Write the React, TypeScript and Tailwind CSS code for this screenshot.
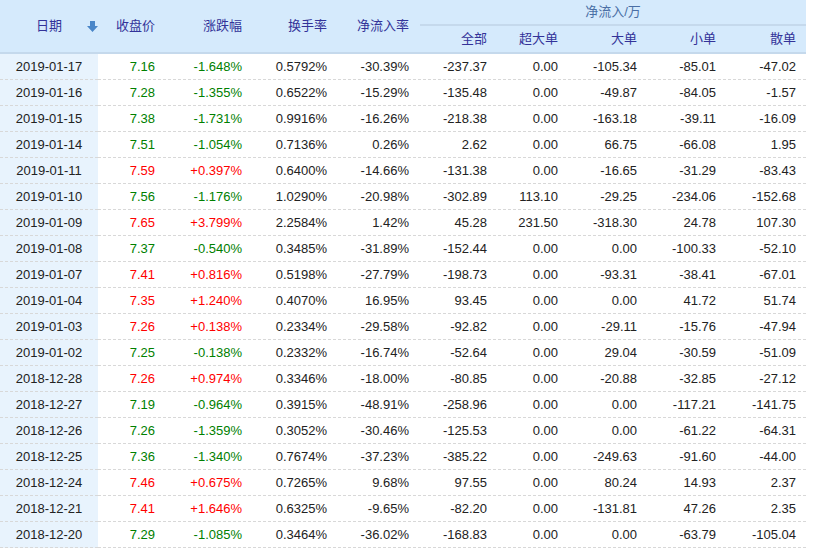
const rows: string[][] = [
  ['2019-01-17','7.16','-1.648%','0.5792%','-30.39%','-237.37','0.00','-105.34','-85.01','-47.02'],
  ['2019-01-16','7.28','-1.355%','0.6522%','-15.29%','-135.48','0.00','-49.87','-84.05','-1.57'],
  ['2019-01-15','7.38','-1.731%','0.9916%','-16.26%','-218.38','0.00','-163.18','-39.11','-16.09'],
  ['2019-01-14','7.51','-1.054%','0.7136%','0.26%','2.62','0.00','66.75','-66.08','1.95'],
  ['2019-01-11','7.59','+0.397%','0.6400%','-14.66%','-131.38','0.00','-16.65','-31.29','-83.43'],
  ['2019-01-10','7.56','-1.176%','1.0290%','-20.98%','-302.89','113.10','-29.25','-234.06','-152.68'],
  ['2019-01-09','7.65','+3.799%','2.2584%','1.42%','45.28','231.50','-318.30','24.78','107.30'],
  ['2019-01-08','7.37','-0.540%','0.3485%','-31.89%','-152.44','0.00','0.00','-100.33','-52.10'],
  ['2019-01-07','7.41','+0.816%','0.5198%','-27.79%','-198.73','0.00','-93.31','-38.41','-67.01'],
  ['2019-01-04','7.35','+1.240%','0.4070%','16.95%','93.45','0.00','0.00','41.72','51.74'],
  ['2019-01-03','7.26','+0.138%','0.2334%','-29.58%','-92.82','0.00','-29.11','-15.76','-47.94'],
  ['2019-01-02','7.25','-0.138%','0.2332%','-16.74%','-52.64','0.00','29.04','-30.59','-51.09'],
  ['2018-12-28','7.26','+0.974%','0.3346%','-18.00%','-80.85','0.00','-20.88','-32.85','-27.12'],
  ['2018-12-27','7.19','-0.964%','0.3915%','-48.91%','-258.96','0.00','0.00','-117.21','-141.75'],
  ['2018-12-26','7.26','-1.359%','0.3052%','-30.46%','-125.53','0.00','0.00','-61.22','-64.31'],
  ['2018-12-25','7.36','-1.340%','0.7674%','-37.23%','-385.22','0.00','-249.63','-91.60','-44.00'],
  ['2018-12-24','7.46','+0.675%','0.7265%','9.68%','97.55','0.00','80.24','14.93','2.37'],
  ['2018-12-21','7.41','+1.646%','0.6325%','-9.65%','-82.20','0.00','-131.81','47.26','2.35'],
  ['2018-12-20','7.29','-1.085%','0.3464%','-36.02%','-168.83','0.00','0.00','-63.79','-105.04'],
]

const widths = ['w-[98px]','w-[67px]','w-[87px]','w-[85px]','w-[82px]','w-[78px]','w-[71px]','w-[79px]','w-[79px]','w-[80px]']

export default function App() {
  return (
    <div className="w-[813px] h-[551px] overflow-hidden bg-white text-[13px]" style={{ fontFamily: '"Liberation Sans", "Noto Sans CJK SC", sans-serif' }}>
      <div className="w-[806px]">
        <div className="flex h-[54px] bg-[#d5eafc] border-b-2 border-[#c5d9ec] text-[#333399]">
          <div className="w-[98px] flex items-center justify-center relative">
            <span>日期</span>
            <svg className="absolute left-[87px] top-[21px]" width="11" height="11" viewBox="0 0 11 11"><path d="M3 0h5v5h3L5.5 11 0 5h3z" fill="#4a86c8" /></svg>
          </div>
          {['收盘价','涨跌幅','换手率','净流入率'].map((h, i) => (
            <div key={h} className={`${widths[i + 1]} flex items-center justify-end pr-[10px]`}>{h}</div>
          ))}
          <div className="flex-1 flex flex-col">
            <div className="h-[26px] flex items-center justify-center text-[#4a6fa5] border-b-2 border-[#c5d9ec] ml-[1px]">净流入/万</div>
            <div className="flex flex-1">
              {['全部','超大单','大单','小单','散单'].map((h, i) => (
                <div key={h} className={`${widths[i + 5]} flex items-center justify-end pr-[10px]`}>{h}</div>
              ))}
            </div>
          </div>
        </div>
        {rows.map((r) => {
          const up = r[2].startsWith('+')
          const c = up ? 'text-[#ff0000]' : 'text-[#008000]'
          return (
            <div key={r[0]} className="flex h-[26px] text-[#222]">
              <div className="w-[98px] flex items-center justify-center bg-[#e8f3fd] border-b border-dashed border-[#d8d8d8]">{r[0]}</div>
              <div className="flex flex-1 border-b border-dashed border-[#d8d8d8]">
                {r.slice(1).map((v, i) => (
                  <div key={i} className={`${widths[i + 1]} flex items-center justify-end pr-[10px] ${i < 2 ? c : ''}`}>{v}</div>
                ))}
              </div>
            </div>
          )
        })}
      </div>
    </div>
  )
}
